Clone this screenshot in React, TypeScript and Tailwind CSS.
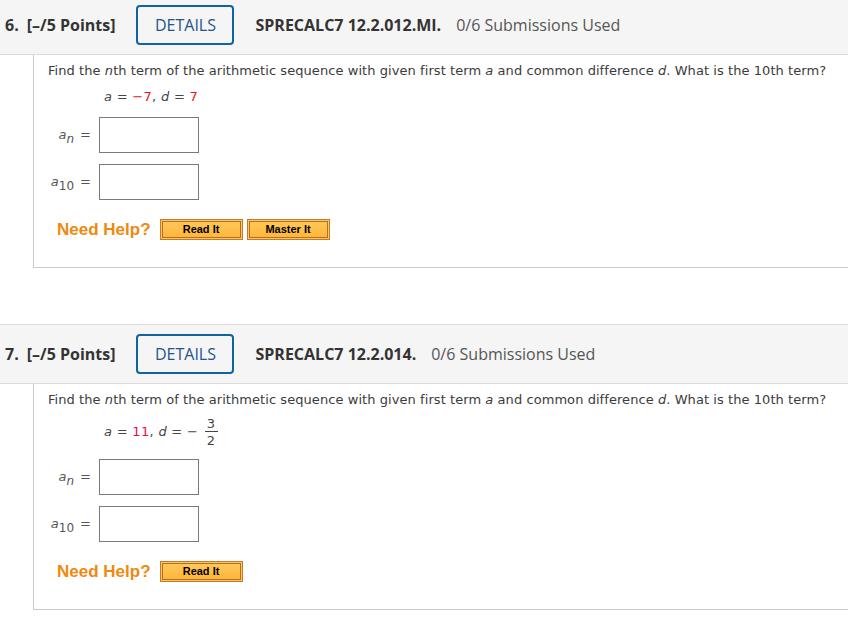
import React from "react";

type HeaderProps = {
  num: string;
  code: string;
  first?: boolean;
};

function QuestionHeader({ num, code, first }: HeaderProps) {
  return (
    <div
      className={
        "flex h-[60px] items-center border-y border-[#dcdcdc] bg-[#f5f5f5] pl-[5px] font-['Open_Sans',sans-serif] text-[16px] text-[#333]" +
        (first ? " -mt-[5px]" : "")
      }
    >
      <span className="font-bold">{num}</span>
      <span className="ml-[8px] font-bold">[–/5 Points]</span>
      <button className="ml-[21px] h-[40px] w-[98px] rounded-[4px] border-2 border-[#0d64a0] text-center text-[16px] text-[#25538a]">
        DETAILS
      </button>
      <span className="ml-[21px] font-bold">{code}</span>
      <span className="ml-[15px] text-[#555]">0/6 Submissions Used</span>
    </div>
  );
}

function Var({ children }: { children: React.ReactNode }) {
  return <i className="italic">{children}</i>;
}

function AnswerRow({ sub }: { sub: string }) {
  return (
    <div className="flex items-center">
      <div className="w-[57px] text-right text-[13px] leading-[20px] text-[#555]">
        <i>a</i>
        <span className="relative top-[4px] text-[12px]">
          {sub === "n" ? <i>n</i> : sub}
        </span>
        <span className="ml-[6px]">=</span>
      </div>
      <input
        type="text"
        className="ml-[8px] h-[36px] w-[100px] border border-[#7a7a7a] bg-white outline-none"
      />
    </div>
  );
}

function HelpButton({ label }: { label: string }) {
  return (
    <span className="inline-flex h-[21px] w-[83px] border border-[#c77a2c] bg-[#ffc65a] p-[1px]">
      <span className="flex flex-1 items-center justify-center border border-[#b36e28] bg-gradient-to-b from-[#ffc85a] to-[#ffb63a] font-['Liberation_Sans',Arial,sans-serif] text-[11px] font-bold text-black">
        {label}
      </span>
    </span>
  );
}

function HelpRow({ master }: { master?: boolean }) {
  return (
    <div className="flex items-center pl-[23px]">
      <span className="font-['Liberation_Sans',Arial,sans-serif] text-[17px] font-bold leading-[21px] text-[#f0890c]">
        Need Help?
      </span>
      <div className="ml-[9px] flex gap-[4px]">
        <HelpButton label="Read It" />
        {master && <HelpButton label="Master It" />}
      </div>
    </div>
  );
}

const prompt = (
  <p className="text-[13px] leading-[20px] tracking-[0.065px] text-[#3b3b3b]">
    Find the <Var>n</Var>th term of the arithmetic sequence with given first
    term <Var>a</Var> and common difference <Var>d</Var>. What is the 10th term?
  </p>
);

export default function App() {
  return (
    <div className="h-[621px] w-[848px] overflow-hidden bg-white font-['DejaVu_Sans',Verdana,sans-serif]">
      {/* question 6 */}
      <QuestionHeader num="6." code="SPRECALC7 12.2.012.MI." first />
      <div className="ml-[33px] border-b border-l border-[#cbcbcb] pb-[27px] pl-[14px] pt-[6px]">
        {prompt}
        <div className="mt-[6px] pl-[56px] text-[13px] leading-[20px] tracking-[0.3px] text-[#444]">
          <Var>a</Var> = <span className="text-[#e8141b]">−7</span>,{" "}
          <Var>d</Var> = <span className="text-[#e8141b]">7</span>
        </div>
        <div className="-ml-[14px] mt-[10px] flex flex-col gap-[11px]">
          <AnswerRow sub="n" />
          <AnswerRow sub="10" />
        </div>
        <div className="-ml-[14px] mt-[19px]">
          <HelpRow master />
        </div>
      </div>

      <div className="h-[56px]" />

      {/* question 7 */}
      <QuestionHeader num="7." code="SPRECALC7 12.2.014." />
      <div className="ml-[33px] border-b border-l border-[#cbcbcb] pb-[27px] pl-[14px] pt-[6px]">
        {prompt}
        <div className="mt-[5px] flex h-[34px] items-center pl-[56px] text-[13px] leading-[20px] tracking-[0.3px] text-[#444]">
          <span>
            <Var>a</Var> = <span className="text-[#e0104a]">11</span>,{" "}
            <Var>d</Var> = −&nbsp;
          </span>
          <span className="ml-[2px] inline-flex flex-col items-center leading-[14px]">
            <span className="px-[1px]">3</span>
            <span className="h-px w-[13px] bg-[#444]" />
            <span className="pt-[2px]">2</span>
          </span>
        </div>
        <div className="-ml-[14px] mt-[10px] flex flex-col gap-[11px]">
          <AnswerRow sub="n" />
          <AnswerRow sub="10" />
        </div>
        <div className="-ml-[14px] mt-[19px]">
          <HelpRow />
        </div>
      </div>
    </div>
  );
}
